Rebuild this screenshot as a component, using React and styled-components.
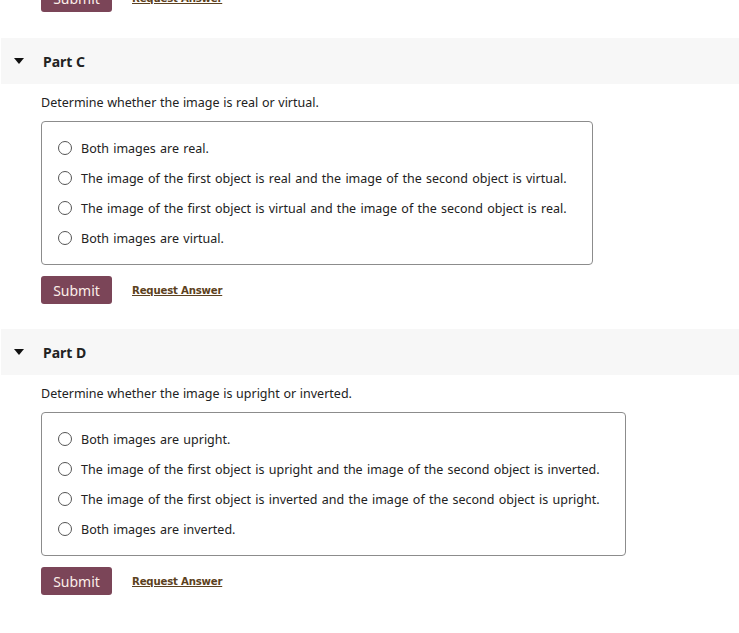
import React from "react";
import styled, { createGlobalStyle } from "styled-components";

const GlobalStyle = createGlobalStyle`
  body {
    margin: 0;
    background: #fff;
    font-family: "Noto Sans", "Open Sans", sans-serif;
    color: #222;
  }
`;

const Page = styled.div`
  margin-top: -16px;
  padding-bottom: 40px;
`;

const Section = styled.section`
  display: flex;
  flex-direction: column;
  align-items: flex-start;
`;

const PartHeader = styled.div`
  align-self: stretch;
  display: flex;
  align-items: center;
  height: 46px;
  margin: ${(p) => p.$top}px 0 0 1px;
  background: #f7f7f7;
`;

const Caret = styled.span`
  width: 0;
  height: 0;
  margin: 0 19px 0 13px;
  border-left: 5px solid transparent;
  border-right: 5px solid transparent;
  border-top: 6px solid #111;
`;

const PartTitle = styled.h2`
  margin: 0;
  font-size: 14px;
  font-weight: 700;
  color: #222;
`;

const Prompt = styled.p`
  margin: 10px 0 0 41px;
  font-size: 12.5px;
  line-height: 18px;
  word-spacing: 0.4px;
  color: #222;
`;

const ChoiceBox = styled.div`
  margin: 9px 0 0 41px;
  padding: 11px 25px 11px 15px;
  border: 1px solid #8c8c8c;
  border-radius: 4px;
  display: flex;
  flex-direction: column;
`;

const Choice = styled.label`
  display: flex;
  align-items: center;
  height: 30px;
  font-size: 12.5px;
  word-spacing: 1px;
  color: #222;
  cursor: pointer;
`;

const Radio = styled.span`
  width: 14px;
  height: 14px;
  box-sizing: border-box;
  border: 1.5px solid #555;
  border-radius: 50%;
  margin: 0 9px 0 1px;
  flex-shrink: 0;
`;

const Actions = styled.div`
  display: flex;
  align-items: center;
  gap: 20px;
  margin: ${(p) => p.$top}px 0 0 41px;
`;

const SubmitButton = styled.button`
  height: 28px;
  width: 71px;
  border: none;
  border-radius: 3px;
  background: #7b4558;
  color: #fbeee8;
  font-family: "Noto Sans", "Open Sans", sans-serif;
  font-size: 14px;
  padding: 0;
  cursor: pointer;
`;

const AnswerLink = styled.a`
  font-family: "DejaVu Sans Condensed", "Liberation Sans Narrow", "Liberation Sans", sans-serif;
  font-size: 11.3px;
  font-weight: 700;
  color: #5c4120;
  text-decoration: underline;
  letter-spacing: -0.2px;
  cursor: pointer;
`;

const parts = [
  {
    title: "Part C",
    headerTop: 26,
    prompt: "Determine whether the image is real or virtual.",
    choices: [
      "Both images are real.",
      "The image of the first object is real and the image of the second object is virtual.",
      "The image of the first object is virtual and the image of the second object is real.",
      "Both images are virtual.",
    ],
  },
  {
    title: "Part D",
    headerTop: 25,
    prompt: "Determine whether the image is upright or inverted.",
    choices: [
      "Both images are upright.",
      "The image of the first object is upright and the image of the second object is inverted.",
      "The image of the first object is inverted and the image of the second object is upright.",
      "Both images are inverted.",
    ],
  },
];

function ActionRow({ top }) {
  return (
    <Actions $top={top}>
      <SubmitButton>Submit</SubmitButton>
      <AnswerLink>Request Answer</AnswerLink>
    </Actions>
  );
}

export default function App() {
  return (
    <>
      <GlobalStyle />
      <Page>
        <ActionRow top={0} />
        {parts.map((part) => (
          <Section key={part.title}>
            <PartHeader $top={part.headerTop}>
              <Caret />
              <PartTitle>{part.title}</PartTitle>
            </PartHeader>
            <Prompt>{part.prompt}</Prompt>
            <ChoiceBox>
              {part.choices.map((c) => (
                <Choice key={c}>
                  <Radio />
                  {c}
                </Choice>
              ))}
            </ChoiceBox>
            <ActionRow top={11} />
          </Section>
        ))}
      </Page>
    </>
  );
}
